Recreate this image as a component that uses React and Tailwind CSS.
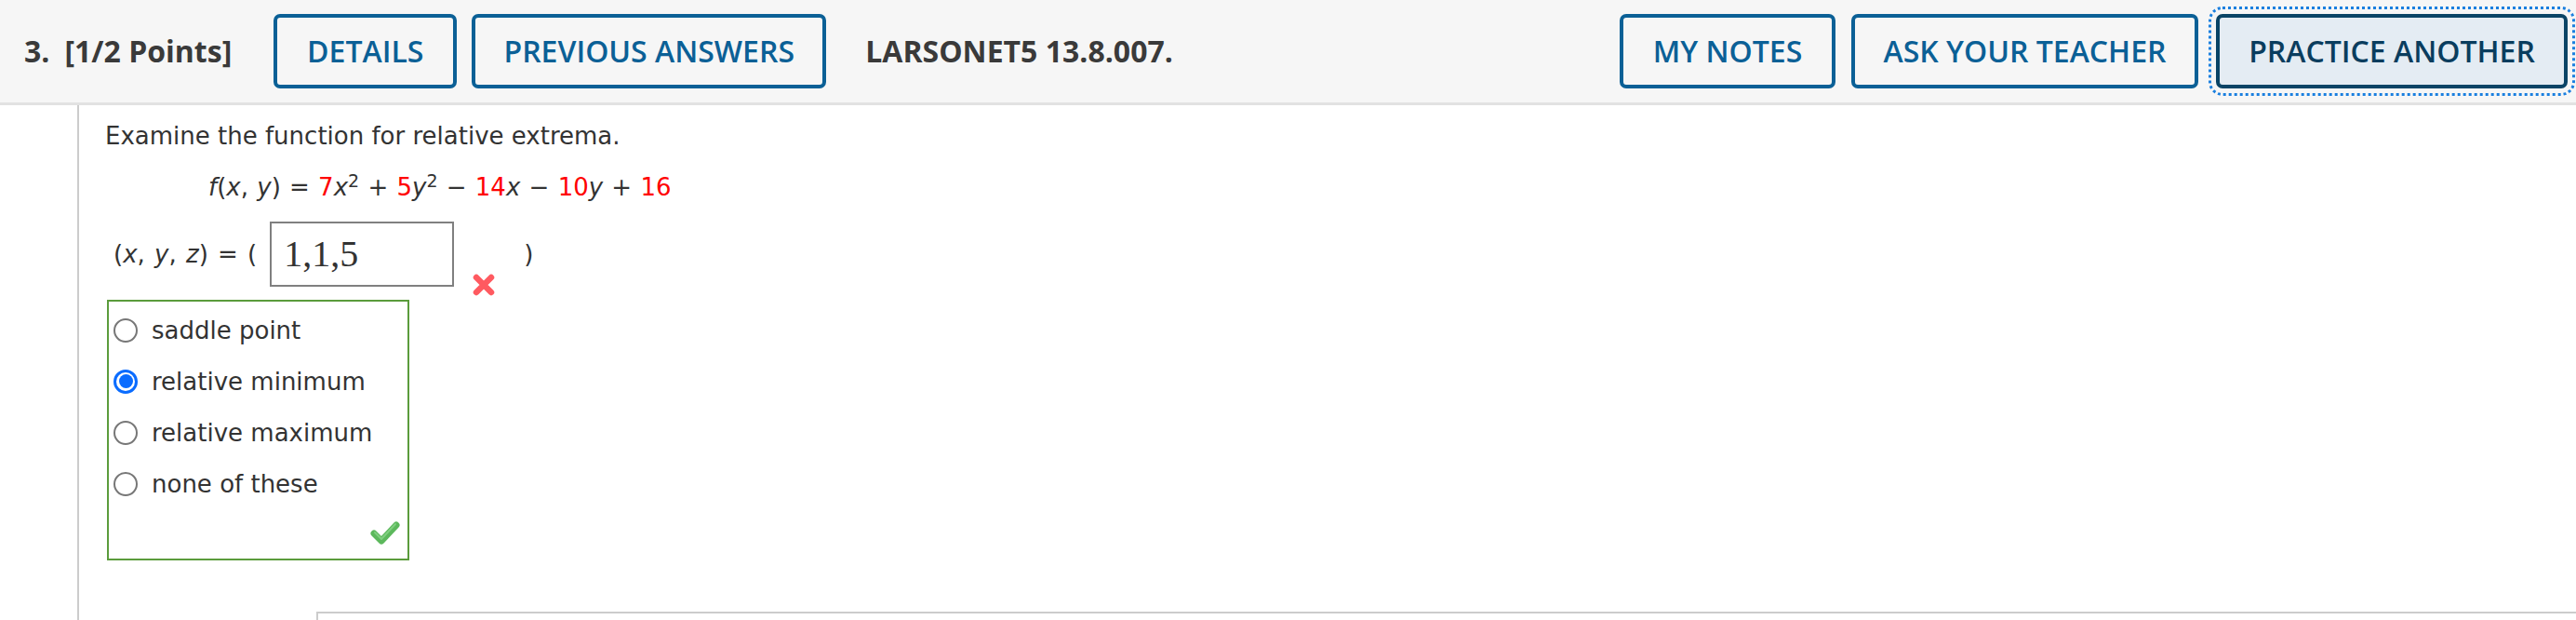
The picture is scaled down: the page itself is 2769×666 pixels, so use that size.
import { useState } from "react";

const btn =
  "h-[80px] flex items-center justify-center rounded-[7px] border-[4px] border-[#0b6096] text-[#0b6096] text-[32px] font-semibold leading-none";

const options = ["saddle point", "relative minimum", "relative maximum", "none of these"];

const Radio = ({ checked }) =>
  checked ? (
    <span className="w-[26px] h-[26px] rounded-full border-[3px] border-[#0a6cff] flex items-center justify-center">
      <span className="w-[15px] h-[15px] rounded-full bg-[#0a6cff]" />
    </span>
  ) : (
    <span className="w-[26px] h-[26px] rounded-full border-2 border-[#777777] bg-white" />
  );

const WrongMark = () => (
  <svg width="26" height="26" viewBox="0 0 26 26" className="blur-[0.6px]">
    <path d="M5 5 L21 21 M21 5 L5 21" stroke="#ff5a60" strokeWidth="6.5" strokeLinecap="round" />
  </svg>
);

const CheckMark = () => (
  <svg width="32" height="26" viewBox="0 0 32 26" className="blur-[0.5px]">
    <path d="M4 14 L12 22 L28 5" fill="none" stroke="#5cb85c" strokeWidth="7" strokeLinecap="round" strokeLinejoin="round" />
    <path d="M5 13 L12 20 L27 4" fill="none" stroke="#7fcf7f" strokeWidth="2" strokeLinecap="round" strokeLinejoin="round" />
  </svg>
);

export default function App() {
  const [choice, setChoice] = useState(1);

  return (
    <div className="w-[2769px] h-[666px] overflow-hidden bg-white font-['Open_Sans',sans-serif]">
      {/* question header */}
      <div className="h-[113px] bg-[#f6f6f6] border-b-[3px] border-[#e2e2e2] flex items-center justify-between pl-[26px] pr-[9px]">
        <div className="flex items-center">
          <span className="text-[32px] font-bold text-[#3a3a3a]">3.</span>
          <span className="text-[32px] font-bold text-[#3a3a3a] ml-[16px]">[1/2 Points]</span>
          <button className={`${btn} w-[197px] ml-[45px]`}>DETAILS</button>
          <button className={`${btn} w-[381px] ml-[16px]`}>PREVIOUS ANSWERS</button>
          <span className="ml-[42px] text-[32px] font-bold text-[#3a3a3a]">LARSONET5 13.8.007.</span>
        </div>
        <div className="flex items-center">
          <button className={`${btn} w-[232px]`}>MY NOTES</button>
          <button className={`${btn} w-[373px] ml-[17px]`}>ASK YOUR TEACHER</button>
          <button className="ml-[19px] w-[378px] h-[80px] flex items-center justify-center rounded-[7px] border-[4px] border-[#0a4466] bg-[#e4ecf3] text-[#0a3d5e] text-[32px] font-semibold leading-none outline-dotted outline-[3px] outline-[#1a7fdf] outline-offset-[5px]">
            PRACTICE ANOTHER
          </button>
        </div>
      </div>

      {/* question body */}
      <div className="flex h-[553px]">
        <div className="w-[83px] shrink-0" />
        <div className="flex-1 border-l-2 border-[#cccccc] pl-[28px] pt-[15px] text-[26px] leading-[36px] text-[#333333] font-['DejaVu_Sans',sans-serif]">
          <p>Examine the function for relative extrema.</p>

          <p className="pl-[111px] mt-[19px] [word-spacing:1px]">
            <i>f</i>(<i>x</i>, <i>y</i>) = <span className="text-[#ff0000]">7</span>
            <i>x</i>
            <sup className="text-[19px]">2</sup> + <span className="text-[#ff0000]">5</span>
            <i>y</i>
            <sup className="text-[19px]">2</sup> − <span className="text-[#ff0000]">14</span>
            <i>x</i> − <span className="text-[#ff0000]">10</span>
            <i>y</i> + <span className="text-[#ff0000]">16</span>
          </p>

          <div className="flex items-center mt-[19px] pl-[9px]">
            <span className="[word-spacing:2px]">
              (<i>x</i>, <i>y</i>, <i>z</i>) = (
            </span>
            <div className="ml-[14px] w-[198px] h-[70px] border-2 border-[#808080] pl-[13px] flex items-center text-[40px] text-[#333333] font-['Liberation_Serif',serif]">
              1,1,5
            </div>
            <div className="ml-[19px] self-end translate-y-[11px]">
              <WrongMark />
            </div>
            <span className="ml-[30px]">)</span>
          </div>

          <div className="mt-[14px] ml-[2px] w-[325px] h-[280px] border-2 border-[#5b9c3c] pt-[3px] pl-[5px]">
            {options.map((o, i) => (
              <label key={o} className="h-[55px] flex items-center gap-[15px] cursor-pointer" onClick={() => setChoice(i)}>
                <Radio checked={choice === i} />
                <span>{o}</span>
              </label>
            ))}
            <div className="flex justify-end pr-[8px] mt-[12px]">
              <CheckMark />
            </div>
          </div>

          <div className="mt-[55px] ml-[227px] h-[20px] border-t-2 border-l-2 border-[#cccccc]" />
        </div>
      </div>
    </div>
  );
}
